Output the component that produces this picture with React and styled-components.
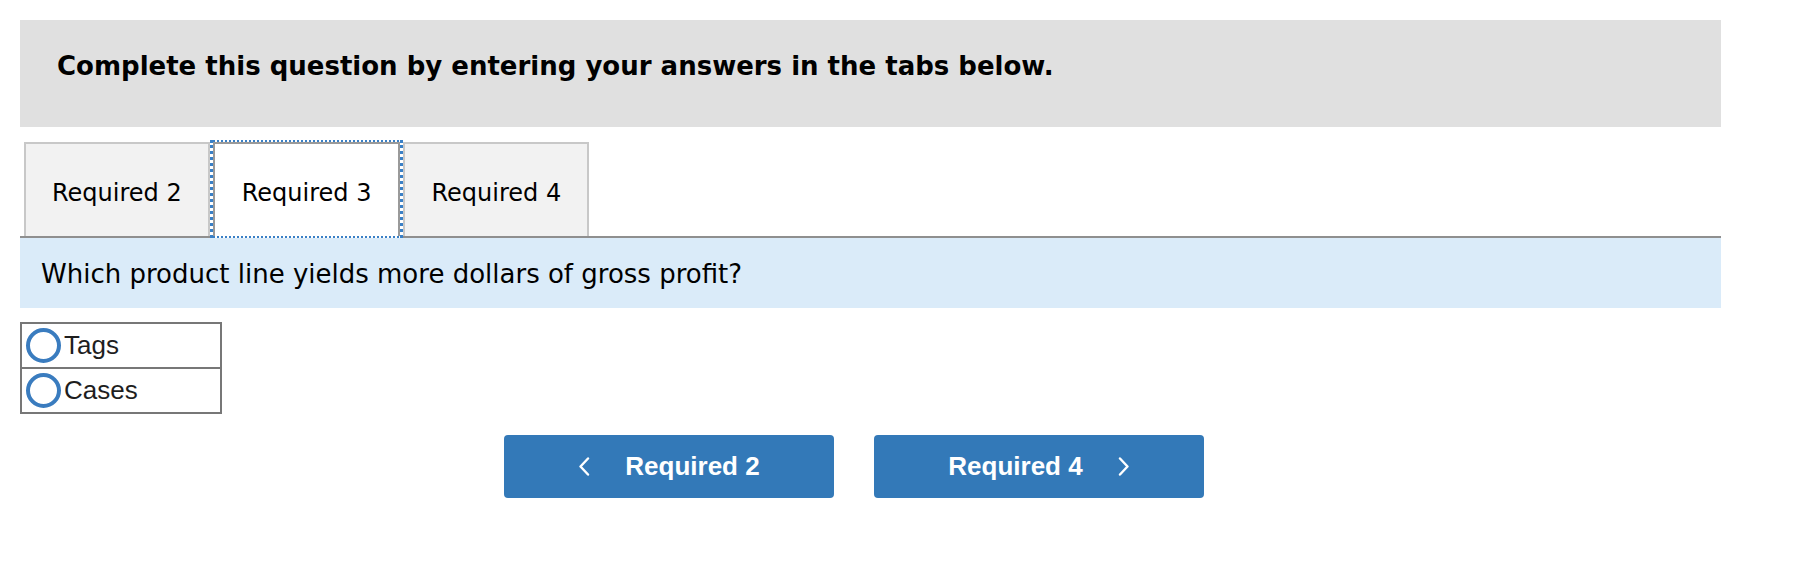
import React from 'react';
import styled, { createGlobalStyle } from 'styled-components';

const GlobalStyle = createGlobalStyle`
  html, body {
    margin: 0;
    padding: 0;
    background: #ffffff;
  }
  body {
    font-family: "DejaVu Sans", Verdana, sans-serif;
    color: #000;
  }
`;

const Page = styled.div`
  width: 1701px;
  padding: 20px 0 0 20px;
`;

const Instructions = styled.div`
  background: #e0e0e0;
  height: 107px;
  box-sizing: border-box;
  padding: 31px 0 0 37px;
  font-family: "DejaVu Sans", Verdana, sans-serif;
  font-weight: bold;
  font-size: 26px;
  line-height: 30px;
`;

const TabList = styled.div`
  display: flex;
  align-items: flex-end;
  margin-top: 15px;
  padding-left: 4px;
  height: 94px;
  border-bottom: 2px solid #8f8f8f;
`;

const Tab = styled.div`
  box-sizing: border-box;
  height: 94px;
  display: flex;
  align-items: center;
  padding: 5px ${p => (p.$active ? '27px' : '26px')} 0;
  background: ${p => (p.$active ? '#ffffff' : '#f2f2f2')};
  border: 2px solid ${p => (p.$active ? '#9a9a9a' : '#c8c8c8')};
  border-bottom: none;
  font-size: 24px;
  line-height: 28px;
  white-space: nowrap;
  cursor: pointer;
`;

const FocusRing = styled.div`
  display: flex;
  align-items: flex-end;
  position: relative;
  z-index: 1;
  margin-bottom: -2px;
  border: 3px dotted #3a80c6;
  border-top-width: 2px;
  border-bottom-width: 2px;
  background: #ffffff;
`;

const Question = styled.div`
  background: #daebf9;
  height: 70px;
  box-sizing: border-box;
  padding: 21px 0 0 21px;
  font-size: 26px;
  line-height: 30px;
`;

const Choices = styled.div`
  margin-top: 14px;
  width: 202px;
  border: 2px solid #777777;
  box-sizing: border-box;
`;

const Choice = styled.label`
  display: flex;
  align-items: center;
  gap: 3px;
  height: ${p => (p.$last ? '43px' : '45px')};
  box-sizing: border-box;
  padding-left: 4px;
  border-bottom: ${p => (p.$last ? 'none' : '2px solid #777777')};
  font-family: "Liberation Sans", Arial, sans-serif;
  font-size: 26px;
  color: #1e1e1e;
  cursor: pointer;
`;

const Radio = styled.span`
  width: 35px;
  height: 35px;
  box-sizing: border-box;
  border: 4px solid #3a7cbf;
  border-radius: 50%;
  background: #fff;
  flex: none;
`;

const ButtonRow = styled.div`
  display: flex;
  gap: 40px;
  margin-top: 21px;
  padding-left: 484px;
`;

const NavButton = styled.button`
  width: 330px;
  height: 63px;
  display: flex;
  align-items: center;
  justify-content: center;
  gap: 35px;
  border: none;
  border-radius: 4px;
  background: #3379b8;
  color: #ffffff;
  font-family: "Liberation Sans", Arial, sans-serif;
  font-weight: bold;
  font-size: 26px;
  padding: 0;
  cursor: pointer;
`;

const Chevron = ({ dir }) => (
  <svg width="12" height="19" viewBox="0 0 12 19" fill="none">
    <path
      d={dir === 'left' ? 'M10 1.5 L2.5 9.5 L10 17.5' : 'M2 1.5 L9.5 9.5 L2 17.5'}
      stroke="#ffffff"
      strokeWidth="2.4"
      strokeLinecap="round"
      strokeLinejoin="round"
    />
  </svg>
);

export default function App() {
  return (
    <>
      <GlobalStyle />
      <Page>
        <Instructions>Complete this question by entering your answers in the tabs below.</Instructions>
        <TabList>
          <Tab>Required 2</Tab>
          <FocusRing>
            <Tab $active>Required 3</Tab>
          </FocusRing>
          <Tab>Required 4</Tab>
        </TabList>
        <Question>Which product line yields more dollars of gross profit?</Question>
        <Choices>
          <Choice>
            <Radio />
            Tags
          </Choice>
          <Choice $last>
            <Radio />
            Cases
          </Choice>
        </Choices>
        <ButtonRow>
          <NavButton>
            <Chevron dir="left" />
            Required 2
          </NavButton>
          <NavButton>
            Required 4
            <Chevron dir="right" />
          </NavButton>
        </ButtonRow>
      </Page>
    </>
  );
}
